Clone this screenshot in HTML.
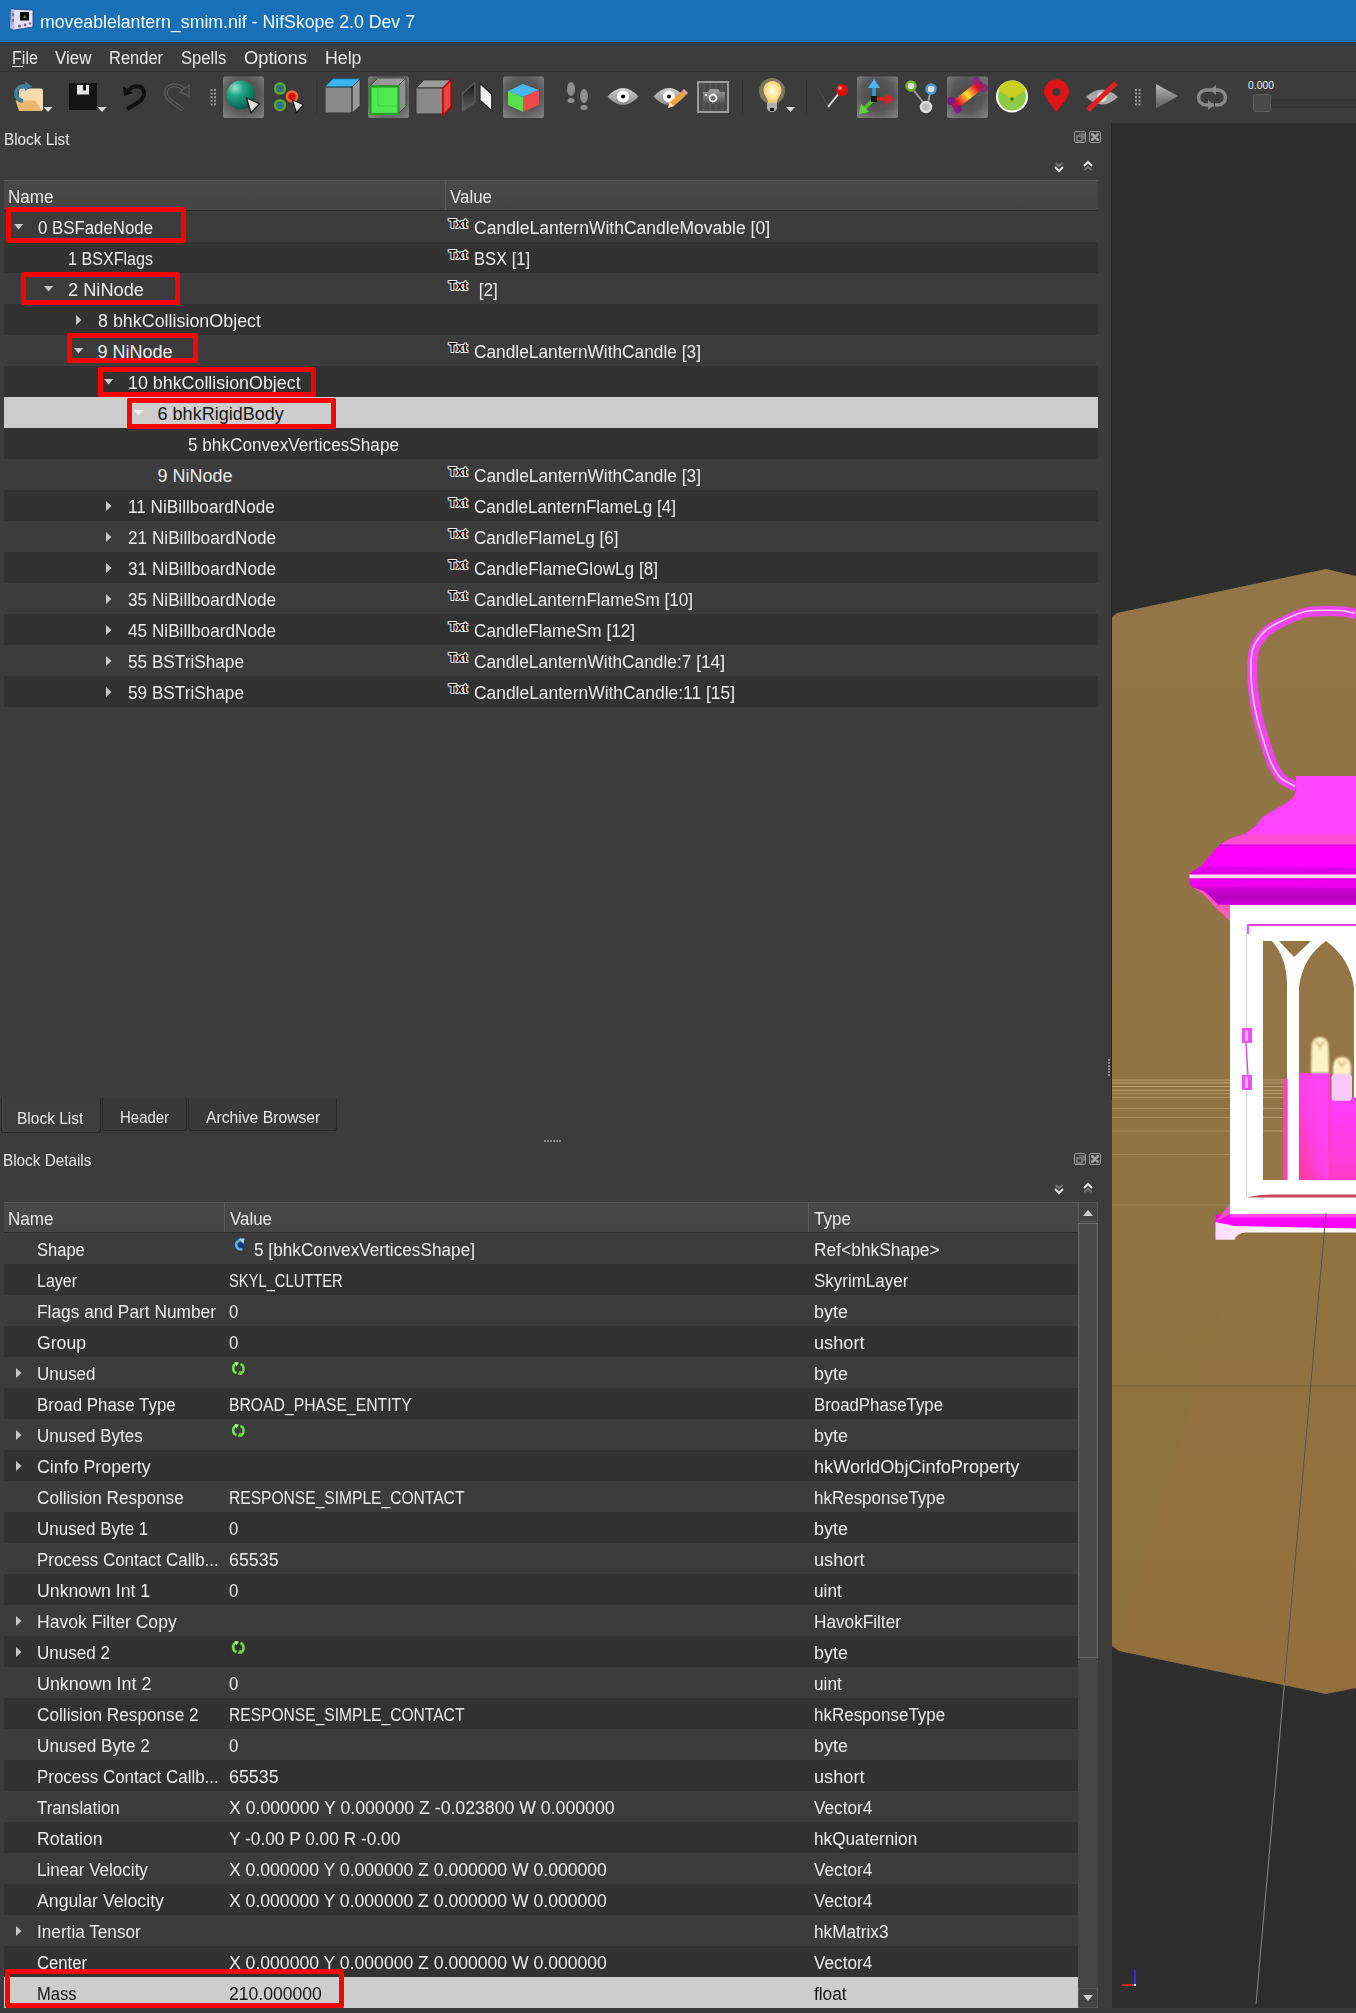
<!DOCTYPE html>
<html><head><meta charset="utf-8"><style>
html,body{margin:0;padding:0}
body{width:1356px;height:2013px;overflow:hidden;position:relative;background:#3b3b3b;font-family:"Liberation Sans", sans-serif}
.t{position:absolute;white-space:pre;line-height:1;transform-origin:0 0;}
</style></head><body>
<div style="position:absolute;left:0px;top:0px;width:1356px;height:42px;background:#1a70b7;"></div><svg style="position:absolute;left:8px;top:6px" width="28" height="26" viewBox="8 6 28 26"><path d="M11,9 L33,10 L33,27 L14,30 L10,28z" fill="#e4e0f4" stroke="#10408a" stroke-width="0.8"/><path d="M11,9 L14,10 L14,30 L10,28z" fill="#b8b4d8"/><rect x="20" y="12" width="9" height="8.5" fill="#0a0a0a"/><path d="M23,18 l2,-3 l1,3z" fill="#5a9a5a"/><circle cx="19.5" cy="26" r="1.6" fill="#806080"/><circle cx="25" cy="25" r="1.4" fill="#806080"/><circle cx="30" cy="23.5" r="1.2" fill="#806080"/><rect x="12" y="13" width="2" height="3" fill="#8070a0"/><rect x="12" y="19" width="2" height="3" fill="#8070a0"/></svg><div class="t" style="left:40px;top:11.92px;font-size:19px;color:#f2fbff;transform:scaleX(0.9320);">moveablelantern_smim.nif - NifSkope 2.0 Dev 7</div><div style="position:absolute;left:0px;top:42px;width:1356px;height:29px;background:#3c3c3c;"></div><div style="position:absolute;left:0px;top:42px;width:1356px;height:4px;background:#353a3e;"></div><div class="t" style="left:11.8px;top:48.76px;font-size:18px;color:#e8e8e8;transform:scaleX(0.8961);">File</div><div class="t" style="left:55.2px;top:48.76px;font-size:18px;color:#e8e8e8;transform:scaleX(0.9405);">View</div><div class="t" style="left:109.3px;top:48.76px;font-size:18px;color:#e8e8e8;transform:scaleX(0.9162);">Render</div><div class="t" style="left:181.3px;top:48.76px;font-size:18px;color:#e8e8e8;transform:scaleX(0.9219);">Spells</div><div class="t" style="left:244.4px;top:48.76px;font-size:18px;color:#e8e8e8;transform:scaleX(1.0170);">Options</div><div class="t" style="left:325px;top:48.76px;font-size:18px;color:#e8e8e8;transform:scaleX(0.9857);">Help</div><div style="position:absolute;left:12px;top:66px;width:11px;height:1px;background:#e8e8e8;"></div><div style="position:absolute;left:0px;top:71px;width:1356px;height:52px;background:#3c3c3c;"></div><div style="position:absolute;left:0px;top:71px;width:1356px;height:1px;background:#333333;"></div><svg style="position:absolute;left:0;top:71px" width="1356" height="52" viewBox="0 71 1356 52"><defs>
<radialGradient id="pressed" cx="0.5" cy="0.45" r="0.72"><stop offset="0" stop-color="#484848"/><stop offset="0.55" stop-color="#585858"/><stop offset="1" stop-color="#848484"/></radialGradient>
<radialGradient id="teal" cx="0.3" cy="0.25" r="0.8"><stop offset="0" stop-color="#9fe3cf"/><stop offset="0.35" stop-color="#1fa886"/><stop offset="1" stop-color="#0a5a48"/></radialGradient>
<linearGradient id="ptr" x1="0" y1="0" x2="1" y2="1"><stop offset="0" stop-color="#ffffff"/><stop offset="1" stop-color="#b8b8b8"/></linearGradient>
<radialGradient id="bulb" cx="0.5" cy="0.45" r="0.6"><stop offset="0" stop-color="#fffbe8"/><stop offset="0.5" stop-color="#fde79a"/><stop offset="1" stop-color="#e8c060"/></radialGradient>
<radialGradient id="bone" cx="0.5" cy="0.5" r="0.6"><stop offset="0" stop-color="#ffee33"/><stop offset="0.45" stop-color="#ff3300"/><stop offset="0.8" stop-color="#cc0044"/><stop offset="1" stop-color="#6a1a8a"/></radialGradient>
<linearGradient id="playg" x1="0" y1="0" x2="0" y2="1"><stop offset="0" stop-color="#b8b8b8"/><stop offset="1" stop-color="#5a5a5a"/></linearGradient>
<linearGradient id="eyeg" x1="0" y1="0" x2="0" y2="1"><stop offset="0" stop-color="#d0d0d0"/><stop offset="1" stop-color="#8a8a8a"/></linearGradient>
<linearGradient id="camg" x1="0" y1="0" x2="0" y2="1"><stop offset="0" stop-color="#a0a0a0"/><stop offset="1" stop-color="#505050"/></linearGradient>
<linearGradient id="faceL" x1="0" y1="0" x2="0" y2="1"><stop offset="0" stop-color="#111"/><stop offset="1" stop-color="#666"/></linearGradient>
<linearGradient id="faceR" x1="0" y1="0" x2="0" y2="1"><stop offset="0" stop-color="#fff"/><stop offset="1" stop-color="#bbb"/></linearGradient>
</defs><rect x="223" y="76.5" width="41" height="41.5" rx="2" fill="url(#pressed)"/><rect x="368" y="76.5" width="41" height="41.5" rx="2" fill="url(#pressed)"/><rect x="503" y="76.5" width="41" height="41.5" rx="2" fill="url(#pressed)"/><rect x="857" y="76.5" width="41" height="41.5" rx="2" fill="url(#pressed)"/><rect x="947" y="76.5" width="41" height="41.5" rx="2" fill="url(#pressed)"/><rect x="19" y="88.5" width="24" height="22.5" rx="2" fill="#f6dbae"/><path d="M15.5,100.5 H35 L42,111 H19z" fill="#e9b76e"/><path d="M28,87.5 A7.5,7.5 0 1 0 23,101" fill="none" stroke="#3f7f95" stroke-width="4"/><path d="M27,90 A5,5 0 0 0 20,95" fill="none" stroke="#a8d8e0" stroke-width="1.2"/><path d="M25,81.5 L32,86.5 L25,91z" fill="#3f7f95"/><path d="M43.5,107 h9 l-4.5,5z" fill="#d8d8d8"/><rect x="69" y="83" width="28" height="27" fill="#141414"/><rect x="77" y="85" width="12" height="9.5" fill="#e8e8e8"/><rect x="83" y="85" width="3" height="5.5" fill="#141414"/><path d="M97.5,107 h9 l-4.5,5z" fill="#d8d8d8"/><path d="M129,90 C134,84 145,85 144,95 C143,101 134,105 127,109" fill="none" stroke="#111" stroke-width="4"/><path d="M123,86 L124,96 L133,93z" fill="#111"/><path d="M184,90 C178,83 166,84 166,93 C166,100 176,104 183,110" fill="none" stroke="#5a5a5a" stroke-width="4"/><path d="M184,90 C178,83 166,84 166,93 C166,100 176,104 183,110" fill="none" stroke="#3c3c3c" stroke-width="1.6"/><path d="M189,85 L189,96 L180,92z" fill="none" stroke="#5a5a5a" stroke-width="1.2"/><rect x="210.5" y="89.0" width="2" height="2" fill="#9a9a9a"/><rect x="214.0" y="89.0" width="2" height="2" fill="#9a9a9a"/><rect x="210.5" y="92.6" width="2" height="2" fill="#9a9a9a"/><rect x="214.0" y="92.6" width="2" height="2" fill="#9a9a9a"/><rect x="210.5" y="96.2" width="2" height="2" fill="#9a9a9a"/><rect x="214.0" y="96.2" width="2" height="2" fill="#9a9a9a"/><rect x="210.5" y="99.8" width="2" height="2" fill="#9a9a9a"/><rect x="214.0" y="99.8" width="2" height="2" fill="#9a9a9a"/><rect x="210.5" y="103.4" width="2" height="2" fill="#9a9a9a"/><rect x="214.0" y="103.4" width="2" height="2" fill="#9a9a9a"/><rect x="1135.0" y="89.0" width="2" height="2" fill="#9a9a9a"/><rect x="1138.5" y="89.0" width="2" height="2" fill="#9a9a9a"/><rect x="1135.0" y="92.6" width="2" height="2" fill="#9a9a9a"/><rect x="1138.5" y="92.6" width="2" height="2" fill="#9a9a9a"/><rect x="1135.0" y="96.2" width="2" height="2" fill="#9a9a9a"/><rect x="1138.5" y="96.2" width="2" height="2" fill="#9a9a9a"/><rect x="1135.0" y="99.8" width="2" height="2" fill="#9a9a9a"/><rect x="1138.5" y="99.8" width="2" height="2" fill="#9a9a9a"/><rect x="1135.0" y="103.4" width="2" height="2" fill="#9a9a9a"/><rect x="1138.5" y="103.4" width="2" height="2" fill="#9a9a9a"/><circle cx="241" cy="95" r="14.5" fill="url(#teal)"/><path d="M246.5,98 l13.2,5.6 l-8.7,9.4z" fill="url(#ptr)" stroke="#1a1a1a" stroke-width="1.3" stroke-linejoin="round"/><circle cx="280" cy="88.6" r="5" fill="#2f6f8a" stroke="#5aaa2a" stroke-width="2.5"/><circle cx="280" cy="105.2" r="5" fill="#2f6f8a" stroke="#5aaa2a" stroke-width="2.5"/><circle cx="292" cy="96.5" r="5" fill="#e01010" stroke="#f06a30" stroke-width="2.5"/><path d="M292.5,100 l11.219999999999999,4.76 l-7.395,7.99z" fill="url(#ptr)" stroke="#1a1a1a" stroke-width="1.3" stroke-linejoin="round"/><rect x="316" y="80" width="1" height="34" fill="#333"/><rect x="742" y="80" width="1" height="34" fill="#333"/><rect x="806" y="80" width="1" height="34" fill="#333"/><path d="M325,87 h27 v26 h-27z" fill="#8a8a8a"/><path d="M325,87 l8,-8 h27 l-8,8z" fill="#3ab4ee" stroke="#1a80c0" stroke-width="0.8"/><path d="M352,87 l8,-8 v27 l-8,7z" fill="#9a9a9a" stroke="#333" stroke-width="0.8"/><path d="M325,87 h27 v26 h-27z" fill="none" stroke="#333" stroke-width="1"/><path d="M370,86 l8,-8 h28 l-8,8z" fill="#9a9a9a" stroke="#444" stroke-width="1"/><path d="M398,86 l8,-8 v28 l-8,8z" fill="#8e8e8e" stroke="#444" stroke-width="1"/><rect x="370.5" y="86.5" width="28" height="27.5" fill="#52e852" stroke="#1fa01f" stroke-width="2.2"/><path d="M378,78 v28 h28" fill="none" stroke="#3cc03c" stroke-width="1" opacity="0.6"/><path d="M416,88 l8,-8 h27 l-8,8z" fill="#9a9a9a" stroke="#333" stroke-width="0.8"/><rect x="416" y="88" width="27" height="26" fill="#8a8a8a" stroke="#333" stroke-width="1"/><path d="M443,88 l8,-8 v27 l-8,8z" fill="#ee4444" stroke="#c00000" stroke-width="1.5"/><path d="M462.6,93.3 L474.9,82.6 V102.2 L462.6,111.2z" fill="url(#faceL)" stroke="#585858" stroke-width="1.6" stroke-linejoin="round"/><path d="M479.9,83.3 L491.8,94.2 V110.8 L479.9,100.2z" fill="#f4f4f4" stroke="#2a2a2a" stroke-width="1.4" stroke-linejoin="round"/><path d="M508,91 l15,-7 l16,6 l-16,7z" fill="#4ab8ee"/><path d="M508,91 l15,6 v15 l-15,-7z" fill="#5ae04a"/><path d="M523,97 l16,-7 v15 l-16,7z" fill="#ee4a4a"/><ellipse cx="571" cy="89" rx="4" ry="7" fill="#8e8e8e"/><ellipse cx="571" cy="100.5" rx="3.5" ry="2.5" fill="#8e8e8e"/><ellipse cx="584" cy="96" rx="4" ry="7" fill="#8e8e8e"/><ellipse cx="584" cy="107.5" rx="3.5" ry="2.5" fill="#8e8e8e"/><path d="M607.5,96.5 Q623,79.5 638.5,96.5 Q623,113.5 607.5,96.5z" fill="url(#eyeg)"/><circle cx="623" cy="96.5" r="6" fill="#fff"/><circle cx="623" cy="96.5" r="2" fill="#000"/><path d="M653.5,96.5 Q669,79.5 684.5,96.5 Q669,113.5 653.5,96.5z" fill="url(#eyeg)"/><circle cx="669" cy="96.5" r="6" fill="#fff"/><circle cx="669" cy="96.5" r="2" fill="#000"/><path d="M668,108 l2,-6 l12,-11 l4,4 l-12,11z" fill="#f0a040"/><path d="M682,91 l2,-2 l4,4 l-2,2z" fill="#f0a0a0"/><path d="M668,108 l2,-6 l4,4z" fill="#ffe0b0"/><rect x="698" y="82" width="30" height="30" fill="#4a4a4a" stroke="#9a9a9a" stroke-width="2"/><line x1="704" y1="83" x2="704" y2="111" stroke="#5e5e5e" stroke-width="1"/><line x1="710" y1="83" x2="710" y2="111" stroke="#5e5e5e" stroke-width="1"/><line x1="716" y1="83" x2="716" y2="111" stroke="#5e5e5e" stroke-width="1"/><line x1="722" y1="83" x2="722" y2="111" stroke="#5e5e5e" stroke-width="1"/><path d="M703,92 h5 l2,-3 h8 l2,3 h5 v12 h-22z" fill="url(#camg)"/><circle cx="713" cy="98" r="3.5" fill="none" stroke="#fff" stroke-width="1.8"/><rect x="705" y="94" width="2" height="2" fill="#fff"/><circle cx="772" cy="91" r="13" fill="#f8e9a0" opacity="0.35"/><path d="M764,93 a9,9 0 1 1 17,0 c-1,3 -4,6 -4,10 h-9 c0,-4 -3,-7 -4,-10z" fill="url(#bulb)"/><path d="M767,103 h10 v5 a5,4 0 0 1 -10,0z" fill="#b0b0b0"/><rect x="770" y="108" width="4" height="3" fill="#111"/><path d="M786,107 h9 l-4.5,5z" fill="#d8d8d8"/><path d="M818,88 L828,106 L838,92" fill="none" stroke="#4a4a4a" stroke-width="1.5"/><path d="M828,107 L840,92" fill="none" stroke="#d8d8d8" stroke-width="2"/><circle cx="842" cy="90" r="6" fill="#e01010"/><circle cx="840" cy="88" r="2" fill="#ff8080"/><path d="M874,99 v-14" stroke="#2aa0e0" stroke-width="3.5"/><path d="M868,88 l6,-9 l6,9z" fill="#4ab8f0"/><path d="M874,99 h14" stroke="#e02020" stroke-width="3.5"/><path d="M885,93 l9,6 l-9,6z" fill="#e02020"/><path d="M874,99 l-11,11" stroke="#50c030" stroke-width="3.5"/><path d="M861,104 l-2,10 l10,-2z" fill="#60d040"/><rect x="871" y="96" width="6" height="6" fill="#111"/><path d="M911,87 L927,107 L931,89" fill="none" stroke="#9a9a9a" stroke-width="2"/><circle cx="911" cy="86" r="4.5" fill="#ddd" stroke="#6ab02a" stroke-width="2.5"/><circle cx="931" cy="89" r="4.5" fill="#ddd" stroke="#3aa0d8" stroke-width="2.5"/><circle cx="926" cy="107" r="5" fill="#bbb" stroke="#ddd" stroke-width="2.5"/><linearGradient id="boneL" gradientUnits="userSpaceOnUse" x1="952" y1="108" x2="983" y2="82"><stop offset="0" stop-color="#6a1a90"/><stop offset="0.2" stop-color="#e01030"/><stop offset="0.5" stop-color="#ffe030"/><stop offset="0.8" stop-color="#e01030"/><stop offset="1" stop-color="#6a1a90"/></linearGradient><path d="M956,104 L979,86" stroke="url(#boneL)" stroke-width="9" stroke-linecap="round"/><circle cx="951" cy="101" r="4" fill="#7a1a8a"/><circle cx="958" cy="109" r="4" fill="#7a1a8a"/><circle cx="976" cy="81" r="4" fill="#8a2a7a"/><circle cx="984" cy="88" r="4" fill="#8a2a7a"/><path d="M953,103 L958,108" stroke="#c01040" stroke-width="3"/><path d="M977,83 L982,88" stroke="#c01040" stroke-width="3"/><circle cx="1012" cy="96.5" r="15" fill="#8ccc44" stroke="#fff" stroke-width="2"/><path d="M998,90 A15,15 0 0 1 1026,90 L1012,99z" fill="#c8d020"/><circle cx="1012" cy="99" r="1.8" fill="#3a7a10"/><path d="M1056.5,112 C1050,103 1044,97 1044,92 a12.5,12.5 0 0 1 25,0 c0,5 -6,11 -12.5,20z" fill="#e01414"/><circle cx="1056.5" cy="92" r="4" fill="#3c3c3c"/><path d="M1086,97 Q1102,82 1118,97 Q1102,112 1086,97z" fill="#a8a8a8"/><circle cx="1102" cy="97" r="5" fill="#ddd"/><path d="M1088,110 L1116,83" stroke="#e02020" stroke-width="5"/><path d="M1156,84 L1178,96 L1156,108.5z" fill="url(#playg)"/><path d="M1206,90 h12 a7.5,7.5 0 0 1 0,15 h-3 M1214,105 h-8 a7.5,7.5 0 0 1 0,-15 h3" fill="none" stroke="#8a8a8a" stroke-width="3.5"/><path d="M1216,85 l-6,5 l6,5z" fill="#8a8a8a"/><path d="M1208,100 l6,5 l-6,5z" fill="#8a8a8a"/><rect x="1271" y="100" width="90" height="7" fill="#3a3a3a" stroke="#2e2e2e" stroke-width="1"/><rect x="1253.5" y="94.5" width="17" height="17" rx="2" fill="#4a4a4a" stroke="#5e5e5e" stroke-width="1"/><text x="1248" y="89" font-family="Liberation Sans" font-size="10.5" fill="#f0f0f0" textLength="26" lengthAdjust="spacingAndGlyphs">0.000</text></svg><div style="position:absolute;left:1112px;top:123px;width:244px;height:1885px;background:#2e2e2e;"></div><svg style="position:absolute;left:1112px;top:123px" width="244" height="1885" viewBox="1112 123 244 1885">
<defs><linearGradient id="brg" gradientUnits="userSpaceOnUse" x1="0" y1="570" x2="0" y2="1694"><stop offset="0" stop-color="#937648"/><stop offset="0.5" stop-color="#917444"/><stop offset="1" stop-color="#926f3c"/></linearGradient>
<filter id="blur2"><feGaussianBlur stdDeviation="2"/></filter><filter id="blur1" x="-50%" y="-50%" width="200%" height="200%"><feGaussianBlur stdDeviation="1"/></filter></defs>
<polygon points="1112,617 1117,613 1326,569 1356,576 1356,1688 1326,1694 1119,1651 1112,1646" fill="url(#brg)"/>
<linearGradient id="olv" gradientUnits="userSpaceOnUse" x1="1240" y1="1240" x2="1150" y2="1600"><stop offset="0" stop-color="#85763a" stop-opacity="0"/><stop offset="1" stop-color="#887538" stop-opacity="0.5"/></linearGradient><polygon points="1112,1230 1245,1230 1119,1643 1112,1640" fill="url(#olv)"/>
<line x1="1112" y1="1386" x2="1356" y2="1386" stroke="#6f5a34" stroke-width="1" opacity="0.8"/>
<g stroke="#d9bb8a" stroke-width="1">
<line x1="1112" y1="1080" x2="1230" y2="1080" opacity="0.6"/>
<line x1="1112" y1="1083" x2="1230" y2="1083" opacity="0.7"/>
<line x1="1112" y1="1086.5" x2="1230" y2="1086.5" opacity="0.6"/>
<line x1="1112" y1="1090.5" x2="1230" y2="1090.5" opacity="0.55"/>
<line x1="1112" y1="1093.5" x2="1230" y2="1093.5" opacity="0.5"/>
<line x1="1112" y1="1097.5" x2="1230" y2="1097.5" opacity="0.45"/>
<line x1="1112" y1="1108.5" x2="1230" y2="1108.5" opacity="0.4"/>
<line x1="1112" y1="1117.5" x2="1230" y2="1117.5" opacity="0.35"/>
<line x1="1112" y1="1131" x2="1230" y2="1131" opacity="0.3"/>
<line x1="1112" y1="1154.5" x2="1230" y2="1154.5" opacity="0.3"/>
<line x1="1112" y1="1205" x2="1230" y2="1205" opacity="0.3"/>
</g>
<!-- handle -->
<path d="M1296,787 C1290,784 1286,782 1282,779 C1276,773 1272,764 1268,752 L1260,726 C1257,714 1254,700 1253,688 C1252,675 1251,660 1254,650 C1256,644 1259,639 1264,634 C1268,630 1272,627 1278,624 L1293,617 C1300,614 1305,612 1312,611.5 C1322,611 1335,611 1345,611.5 L1356,614" fill="none" stroke="#f044f0" stroke-width="10" stroke-linejoin="round"/>
<path d="M1296,787 C1290,784 1286,782 1282,779 C1276,773 1272,764 1268,752 L1260,726 C1257,714 1254,700 1253,688 C1252,675 1251,660 1254,650 C1256,644 1259,639 1264,634 C1268,630 1272,627 1278,624 L1293,617 C1300,614 1305,612 1312,611.5 C1322,611 1335,611 1345,611.5 L1356,614" fill="none" stroke="#ffd0ff" stroke-width="1.6" transform="translate(-1.2,-0.8)"/>
<!-- roof -->
<linearGradient id="rfdark" x1="0" y1="0" x2="0" y2="1"><stop offset="0" stop-color="#cf00d6"/><stop offset="0.6" stop-color="#b400c4"/><stop offset="1" stop-color="#d400dc"/></linearGradient>
<rect x="1296" y="776" width="60" height="20" fill="#ff44ff"/>
<polygon points="1296.8,789.9 1293,797.6 1282.5,805.4 1270.8,812 1263,817 1255.3,826.2 1245,834 1232,837.9 1222.8,843 1215,849.6 1207.3,858.6 1200.8,866.4 1190.4,872.9 1190,882 1193,887.2 1203.4,891 1211,897.6 1217.6,904.7 1356,904.7 1356,790" fill="#ff00ff"/>
<polygon points="1296.8,789.9 1293,797.6 1282.5,805.4 1270.8,812 1263,817 1255.3,826.2 1245,834 1232,837.9 1222.8,843 1220,845 1356,845 1356,790" fill="#ff44ff"/>
<polygon points="1246,834.5 1232,837.9 1222.8,843 1220,845 1356,845 1356,834.5" fill="#ff4ed2"/>
<rect x="1219" y="844.5" width="137" height="1.5" fill="#d800e0"/>
<polygon points="1200.8,866.4 1356,867.5 1356,874.5 1190,874.5 1190.4,872.9" fill="#e000ee"/>
<rect x="1189.5" y="874.5" width="166.5" height="4" fill="#ffd8ff"/>
<polygon points="1189.5,878.5 1356,878.5 1356,888 1194,888 1189.6,884" fill="#ee00ee"/>
<polygon points="1193,887.2 1356,888 1356,904.7 1217.6,904.7 1211,897.6 1203.4,891" fill="url(#rfdark)"/>
<polygon points="1194,888 1203.4,891 1211,897.6 1217.6,904.7 1230,905 1230,921 1214,906 1204,895" fill="#ff5ab8"/>
<!-- frame -->
<rect x="1230" y="905" width="126" height="312" fill="#ffffff"/>
<rect x="1247" y="924" width="109" height="2" fill="#f040f0"/><rect x="1247" y="924" width="2" height="10" fill="#f060f0"/>
<line x1="1246.5" y1="925" x2="1246.5" y2="1198" stroke="#d8d8e0" stroke-width="1"/>
<path d="M1263,941 L1272,941 Q1287,958 1287,985 L1287,1180 L1263,1180 Z" fill="#937546"/>
<polygon points="1279,941 1311,941 1294,957" fill="#937546"/>
<path d="M1299,1180 L1299,988 Q1302,958 1326,941 Q1350,958 1354,988 L1354,1180 Z" fill="#937546"/>
<g stroke="#d9bb8a" stroke-width="1" opacity="0.6">
<line x1="1263" y1="1080" x2="1287" y2="1080"/><line x1="1263" y1="1083" x2="1287" y2="1083"/><line x1="1263" y1="1086.5" x2="1287" y2="1086.5"/><line x1="1263" y1="1090.5" x2="1287" y2="1090.5"/><line x1="1263" y1="1093.5" x2="1287" y2="1093.5"/><line x1="1263" y1="1097.5" x2="1287" y2="1097.5"/><line x1="1263" y1="1108.5" x2="1287" y2="1108.5"/><line x1="1263" y1="1117.5" x2="1287" y2="1117.5"/><line x1="1263" y1="1131" x2="1287" y2="1131"/>
</g>
<!-- candles -->
<linearGradient id="cndA" x1="1" y1="0" x2="0" y2="1"><stop offset="0" stop-color="#ff44ff"/><stop offset="0.55" stop-color="#ff40e8"/><stop offset="1" stop-color="#ff3a98"/></linearGradient>
<linearGradient id="cndB" x1="0" y1="0" x2="0" y2="1"><stop offset="0" stop-color="#ff3cff"/><stop offset="1" stop-color="#ff3cc8"/></linearGradient>
<rect x="1283.3" y="1079" width="4.3" height="101" fill="#ff40b8"/>
<rect x="1299" y="1073" width="31" height="107" fill="url(#cndA)"/>
<rect x="1330" y="1097.6" width="26" height="82.4" fill="url(#cndB)"/>
<rect x="1328" y="1073" width="3" height="107" fill="#ff3cb0" opacity="0.5"/>
<g filter="url(#blur1)">
<path d="M1311,1073 L1311.5,1047 Q1312,1037 1320,1037 Q1328,1037 1328.5,1047 L1329,1073 Z" fill="#fff2c4"/>
<path d="M1333,1075 L1333,1066 Q1334,1057 1342,1057 Q1350,1057 1351,1066 L1351,1075 Z" fill="#fff2c4"/>
<path d="M1316,1041 L1320,1047 L1324,1041" fill="none" stroke="#d8b878" stroke-width="2"/>
<path d="M1338,1061 L1342,1066 L1346,1061" fill="none" stroke="#d8b878" stroke-width="2"/>
</g>
<rect x="1331.5" y="1074" width="20.5" height="27" rx="4" fill="#f8c8f8"/>
<!-- hinges -->
<rect x="1242" y="1028" width="10" height="15" fill="#f050f0"/>
<rect x="1242" y="1075" width="10" height="15" fill="#f050f0"/>
<rect x="1245" y="1030" width="3" height="11" fill="#ffb0ff"/>
<rect x="1245" y="1077" width="3" height="11" fill="#ffb0ff"/>
<line x1="1246" y1="1043" x2="1248" y2="1075" stroke="#e040e0" stroke-width="1.2"/>
<path d="M1247,1197.5 Q1258,1194.5 1272,1194.5 L1356,1194.5 L1356,1197.5 Z" fill="#c84858"/>
<!-- base -->
<linearGradient id="baseW" x1="0" y1="0" x2="1" y2="0"><stop offset="0" stop-color="#ffd8ff"/><stop offset="0.3" stop-color="#fff4ff"/><stop offset="1" stop-color="#fff8ff"/></linearGradient>
<rect x="1215.5" y="1214.5" width="140.5" height="14" fill="#ff00ff"/>
<rect x="1230" y="1214.5" width="126" height="3" fill="#ff48ee"/>
<path d="M1215.5,1222 L1235,1226 L1356,1228.5 L1356,1232.6 L1246,1232.6 Q1237,1233 1234.5,1239.7 L1215.5,1239.7 Z" fill="url(#baseW)"/>
<polygon points="1215.5,1222 1230,1204 1230,1214.5" fill="#ff50c0"/>
<line x1="1326" y1="1213" x2="1284.4" y2="1683" stroke="#5e5444" stroke-width="1"/><line x1="1284.4" y1="1683" x2="1256" y2="2004" stroke="#8a8a8a" stroke-width="1"/>
<line x1="1122" y1="1985" x2="1136" y2="1985" stroke="#e02020" stroke-width="2"/>
<line x1="1135" y1="1970" x2="1135" y2="1985" stroke="#3030e0" stroke-width="2"/>
<rect x="1134" y="1984" width="2" height="2" fill="#fff"/>
</svg><div style="position:absolute;left:0px;top:123px;width:1112px;height:977px;background:#3c3c3c;"></div><div style="position:absolute;left:1111px;top:123px;width:1px;height:1890px;background:#262626;"></div><div class="t" style="left:3.5px;top:130.61px;font-size:17px;color:#e8e8e8;transform:scaleX(0.9003);">Block List</div><div style="position:absolute;left:4px;top:180px;width:1094px;height:31px;background:linear-gradient(#474747 0,#474747 2px,#4e4e4e 2px,#4e4e4e 3px,#484848 3px,#454545 100%);border-top:1px solid #5a5a5a;box-sizing:border-box"></div><div style="position:absolute;left:4px;top:210px;width:1094px;height:1px;background:#2a2a2a;"></div><div style="position:absolute;left:445px;top:181px;width:1px;height:29px;background:#5c5c5c;"></div><div class="t" style="left:8px;top:187.76px;font-size:18px;color:#e8e8e8;transform:scaleX(0.9476);">Name</div><div class="t" style="left:450px;top:187.76px;font-size:18px;color:#e8e8e8;transform:scaleX(0.9395);">Value</div><div style="position:absolute;left:4px;top:211px;width:1094px;height:889px;background:#3c3c3c;"></div><svg style="position:absolute;left:13.5px;top:223.8px" width="10" height="6"><path d="M0 0H9.2L4.6 5.4Z" fill="#c8c8c8"/></svg><div class="t" style="left:37.6px;top:218.76px;font-size:18px;color:#ececec;transform:scaleX(0.9342);">0 BSFadeNode</div><svg style="position:absolute;left:447px;top:216px" width="23" height="14" viewBox="0 0 23 14"><text x="1.5" y="11.5" font-family="Liberation Sans" font-weight="bold" font-size="13.5" fill="#000" stroke="#f4f4f4" stroke-width="2.2" paint-order="stroke" stroke-linejoin="round" textLength="19" lengthAdjust="spacingAndGlyphs">Txt</text></svg><div class="t" style="left:474.2px;top:218.76px;font-size:18px;color:#ececec;transform:scaleX(0.9731);">CandleLanternWithCandleMovable [0]</div><div style="position:absolute;left:4px;top:242px;width:1094px;height:31px;background:#323232;"></div><div class="t" style="left:67.6px;top:249.76px;font-size:18px;color:#ececec;transform:scaleX(0.8943);">1 BSXFlags</div><svg style="position:absolute;left:447px;top:247px" width="23" height="14" viewBox="0 0 23 14"><text x="1.5" y="11.5" font-family="Liberation Sans" font-weight="bold" font-size="13.5" fill="#000" stroke="#f4f4f4" stroke-width="2.2" paint-order="stroke" stroke-linejoin="round" textLength="19" lengthAdjust="spacingAndGlyphs">Txt</text></svg><div class="t" style="left:474.2px;top:249.76px;font-size:18px;color:#ececec;transform:scaleX(0.9176);">BSX [1]</div><svg style="position:absolute;left:43.5px;top:285.8px" width="10" height="6"><path d="M0 0H9.2L4.6 5.4Z" fill="#c8c8c8"/></svg><div class="t" style="left:67.6px;top:280.76px;font-size:18px;color:#ececec;transform:scaleX(1.0127);">2 NiNode</div><svg style="position:absolute;left:447px;top:278px" width="23" height="14" viewBox="0 0 23 14"><text x="1.5" y="11.5" font-family="Liberation Sans" font-weight="bold" font-size="13.5" fill="#000" stroke="#f4f4f4" stroke-width="2.2" paint-order="stroke" stroke-linejoin="round" textLength="19" lengthAdjust="spacingAndGlyphs">Txt</text></svg><div class="t" style="left:474.2px;top:280.76px;font-size:18px;color:#ececec;transform:scaleX(0.9550);"> [2]</div><div style="position:absolute;left:4px;top:304px;width:1094px;height:31px;background:#323232;"></div><svg style="position:absolute;left:76px;top:314.5px" width="6" height="10"><path d="M0 0V10L5.5 5Z" fill="#c8c8c8"/></svg><div class="t" style="left:97.6px;top:311.76px;font-size:18px;color:#ececec;transform:scaleX(0.9933);">8 bhkCollisionObject</div><svg style="position:absolute;left:73.5px;top:347.8px" width="10" height="6"><path d="M0 0H9.2L4.6 5.4Z" fill="#c8c8c8"/></svg><div class="t" style="left:97.6px;top:342.76px;font-size:18px;color:#ececec;">9 NiNode</div><svg style="position:absolute;left:447px;top:340px" width="23" height="14" viewBox="0 0 23 14"><text x="1.5" y="11.5" font-family="Liberation Sans" font-weight="bold" font-size="13.5" fill="#000" stroke="#f4f4f4" stroke-width="2.2" paint-order="stroke" stroke-linejoin="round" textLength="19" lengthAdjust="spacingAndGlyphs">Txt</text></svg><div class="t" style="left:474.2px;top:342.76px;font-size:18px;color:#ececec;transform:scaleX(0.9612);">CandleLanternWithCandle [3]</div><div style="position:absolute;left:4px;top:366px;width:1094px;height:31px;background:#323232;"></div><svg style="position:absolute;left:103.5px;top:378.8px" width="10" height="6"><path d="M0 0H9.2L4.6 5.4Z" fill="#c8c8c8"/></svg><div class="t" style="left:127.6px;top:373.76px;font-size:18px;color:#ececec;transform:scaleX(0.9914);">10 bhkCollisionObject</div><div style="position:absolute;left:4px;top:397px;width:1094px;height:31px;background:#cdcdcd;"></div><svg style="position:absolute;left:133.5px;top:409.8px" width="10" height="6"><path d="M0 0H9.2L4.6 5.4Z" fill="#f0f0f0"/></svg><div class="t" style="left:157.6px;top:404.76px;font-size:18px;color:#151515;">6 bhkRigidBody</div><div style="position:absolute;left:4px;top:428px;width:1094px;height:31px;background:#323232;"></div><div class="t" style="left:187.6px;top:435.76px;font-size:18px;color:#ececec;transform:scaleX(0.9541);">5 bhkConvexVerticesShape</div><div class="t" style="left:157.6px;top:466.76px;font-size:18px;color:#ececec;">9 NiNode</div><svg style="position:absolute;left:447px;top:464px" width="23" height="14" viewBox="0 0 23 14"><text x="1.5" y="11.5" font-family="Liberation Sans" font-weight="bold" font-size="13.5" fill="#000" stroke="#f4f4f4" stroke-width="2.2" paint-order="stroke" stroke-linejoin="round" textLength="19" lengthAdjust="spacingAndGlyphs">Txt</text></svg><div class="t" style="left:474.2px;top:466.76px;font-size:18px;color:#ececec;transform:scaleX(0.9612);">CandleLanternWithCandle [3]</div><div style="position:absolute;left:4px;top:490px;width:1094px;height:31px;background:#323232;"></div><svg style="position:absolute;left:106px;top:500.5px" width="6" height="10"><path d="M0 0V10L5.5 5Z" fill="#c8c8c8"/></svg><div class="t" style="left:127.6px;top:497.76px;font-size:18px;color:#ececec;transform:scaleX(0.9550);">11 NiBillboardNode</div><svg style="position:absolute;left:447px;top:495px" width="23" height="14" viewBox="0 0 23 14"><text x="1.5" y="11.5" font-family="Liberation Sans" font-weight="bold" font-size="13.5" fill="#000" stroke="#f4f4f4" stroke-width="2.2" paint-order="stroke" stroke-linejoin="round" textLength="19" lengthAdjust="spacingAndGlyphs">Txt</text></svg><div class="t" style="left:474.2px;top:497.76px;font-size:18px;color:#ececec;transform:scaleX(0.9477);">CandleLanternFlameLg [4]</div><svg style="position:absolute;left:106px;top:531.5px" width="6" height="10"><path d="M0 0V10L5.5 5Z" fill="#c8c8c8"/></svg><div class="t" style="left:127.6px;top:528.76px;font-size:18px;color:#ececec;transform:scaleX(0.9550);">21 NiBillboardNode</div><svg style="position:absolute;left:447px;top:526px" width="23" height="14" viewBox="0 0 23 14"><text x="1.5" y="11.5" font-family="Liberation Sans" font-weight="bold" font-size="13.5" fill="#000" stroke="#f4f4f4" stroke-width="2.2" paint-order="stroke" stroke-linejoin="round" textLength="19" lengthAdjust="spacingAndGlyphs">Txt</text></svg><div class="t" style="left:474.2px;top:528.76px;font-size:18px;color:#ececec;transform:scaleX(0.9494);">CandleFlameLg [6]</div><div style="position:absolute;left:4px;top:552px;width:1094px;height:31px;background:#323232;"></div><svg style="position:absolute;left:106px;top:562.5px" width="6" height="10"><path d="M0 0V10L5.5 5Z" fill="#c8c8c8"/></svg><div class="t" style="left:127.6px;top:559.76px;font-size:18px;color:#ececec;transform:scaleX(0.9550);">31 NiBillboardNode</div><svg style="position:absolute;left:447px;top:557px" width="23" height="14" viewBox="0 0 23 14"><text x="1.5" y="11.5" font-family="Liberation Sans" font-weight="bold" font-size="13.5" fill="#000" stroke="#f4f4f4" stroke-width="2.2" paint-order="stroke" stroke-linejoin="round" textLength="19" lengthAdjust="spacingAndGlyphs">Txt</text></svg><div class="t" style="left:474.2px;top:559.76px;font-size:18px;color:#ececec;transform:scaleX(0.9528);">CandleFlameGlowLg [8]</div><svg style="position:absolute;left:106px;top:593.5px" width="6" height="10"><path d="M0 0V10L5.5 5Z" fill="#c8c8c8"/></svg><div class="t" style="left:127.6px;top:590.76px;font-size:18px;color:#ececec;transform:scaleX(0.9550);">35 NiBillboardNode</div><svg style="position:absolute;left:447px;top:588px" width="23" height="14" viewBox="0 0 23 14"><text x="1.5" y="11.5" font-family="Liberation Sans" font-weight="bold" font-size="13.5" fill="#000" stroke="#f4f4f4" stroke-width="2.2" paint-order="stroke" stroke-linejoin="round" textLength="19" lengthAdjust="spacingAndGlyphs">Txt</text></svg><div class="t" style="left:474.2px;top:590.76px;font-size:18px;color:#ececec;transform:scaleX(0.9517);">CandleLanternFlameSm [10]</div><div style="position:absolute;left:4px;top:614px;width:1094px;height:31px;background:#323232;"></div><svg style="position:absolute;left:106px;top:624.5px" width="6" height="10"><path d="M0 0V10L5.5 5Z" fill="#c8c8c8"/></svg><div class="t" style="left:127.6px;top:621.76px;font-size:18px;color:#ececec;transform:scaleX(0.9550);">45 NiBillboardNode</div><svg style="position:absolute;left:447px;top:619px" width="23" height="14" viewBox="0 0 23 14"><text x="1.5" y="11.5" font-family="Liberation Sans" font-weight="bold" font-size="13.5" fill="#000" stroke="#f4f4f4" stroke-width="2.2" paint-order="stroke" stroke-linejoin="round" textLength="19" lengthAdjust="spacingAndGlyphs">Txt</text></svg><div class="t" style="left:474.2px;top:621.76px;font-size:18px;color:#ececec;transform:scaleX(0.9522);">CandleFlameSm [12]</div><svg style="position:absolute;left:106px;top:655.5px" width="6" height="10"><path d="M0 0V10L5.5 5Z" fill="#c8c8c8"/></svg><div class="t" style="left:127.6px;top:652.76px;font-size:18px;color:#ececec;transform:scaleX(0.9550);">55 BSTriShape</div><svg style="position:absolute;left:447px;top:650px" width="23" height="14" viewBox="0 0 23 14"><text x="1.5" y="11.5" font-family="Liberation Sans" font-weight="bold" font-size="13.5" fill="#000" stroke="#f4f4f4" stroke-width="2.2" paint-order="stroke" stroke-linejoin="round" textLength="19" lengthAdjust="spacingAndGlyphs">Txt</text></svg><div class="t" style="left:474.2px;top:652.76px;font-size:18px;color:#ececec;transform:scaleX(0.9611);">CandleLanternWithCandle:7 [14]</div><div style="position:absolute;left:4px;top:676px;width:1094px;height:31px;background:#323232;"></div><svg style="position:absolute;left:106px;top:686.5px" width="6" height="10"><path d="M0 0V10L5.5 5Z" fill="#c8c8c8"/></svg><div class="t" style="left:127.6px;top:683.76px;font-size:18px;color:#ececec;transform:scaleX(0.9550);">59 BSTriShape</div><svg style="position:absolute;left:447px;top:681px" width="23" height="14" viewBox="0 0 23 14"><text x="1.5" y="11.5" font-family="Liberation Sans" font-weight="bold" font-size="13.5" fill="#000" stroke="#f4f4f4" stroke-width="2.2" paint-order="stroke" stroke-linejoin="round" textLength="19" lengthAdjust="spacingAndGlyphs">Txt</text></svg><div class="t" style="left:474.2px;top:683.76px;font-size:18px;color:#ececec;transform:scaleX(0.9672);">CandleLanternWithCandle:11 [15]</div><div style="position:absolute;left:6px;top:207px;width:170px;height:26px;border:5px solid #fa0000;border-radius:2px"></div><div style="position:absolute;left:21px;top:272px;width:149px;height:23px;border:5px solid #fa0000;border-radius:2px"></div><div style="position:absolute;left:67px;top:333px;width:121px;height:20px;border:5px solid #fa0000;border-radius:2px"></div><div style="position:absolute;left:98px;top:367px;width:208px;height:20px;border:5px solid #fa0000;border-radius:2px"></div><div style="position:absolute;left:127px;top:398px;width:199px;height:21px;border:5px solid #fa0000;border-radius:2px"></div><div style="position:absolute;left:1074px;top:131px;width:10px;height:10px;border:1px solid #9a9a9a;border-radius:2px"></div><div style="position:absolute;left:1089px;top:131px;width:10px;height:10px;border:1px solid #9a9a9a;border-radius:2px"></div><svg style="position:absolute;left:1090px;top:132px" width="10" height="10"><path d="M2.2 2.2L7.8 7.8M7.8 2.2L2.2 7.8" stroke="#a0a0a0" stroke-width="2.8" stroke-linecap="round"/></svg><svg style="position:absolute;left:1076px;top:133px" width="9" height="9"><rect x="1" y="3" width="5" height="5" fill="none" stroke="#9a9a9a" stroke-width="1.2"/><path d="M3 1H8V6" fill="none" stroke="#9a9a9a" stroke-width="1.2"/></svg><svg style="position:absolute;left:1053px;top:161px" width="12" height="13"><path d="M2.5,2 L6,5 L9.5,2" fill="none" stroke="#7a7a7a" stroke-width="1.8"/><path d="M2,6 L6,10 L10,6" fill="none" stroke="#e4e4e4" stroke-width="2"/></svg><svg style="position:absolute;left:1082px;top:160px" width="12" height="13"><path d="M2,6 L6,2 L10,6" fill="none" stroke="#e4e4e4" stroke-width="2"/><path d="M2.5,10 L6,7 L9.5,10" fill="none" stroke="#7a7a7a" stroke-width="1.8"/></svg><div style="position:absolute;left:0px;top:1100px;width:1112px;height:48px;background:#3c3c3c;"></div><div style="position:absolute;left:1px;top:1098px;width:98px;height:34px;background:#3e3e3e;border:1px solid #2a2a2a;border-top:none;border-radius:0 0 3px 3px;box-shadow:inset 1px 0 0 #444"></div><div style="position:absolute;left:102px;top:1098px;width:83px;height:32px;background:#393939;border:1px solid #2a2a2a;border-top:none;border-radius:0 0 3px 3px"></div><div style="position:absolute;left:188px;top:1098px;width:147px;height:32px;background:#393939;border:1px solid #2a2a2a;border-top:none;border-radius:0 0 3px 3px"></div><div class="t" style="left:17.3px;top:1109.61px;font-size:17px;color:#e8e8e8;transform:scaleX(0.9113);">Block List</div><div class="t" style="left:119.5px;top:1108.61px;font-size:17px;color:#e8e8e8;transform:scaleX(0.8805);">Header</div><div class="t" style="left:205.7px;top:1108.61px;font-size:17px;color:#e8e8e8;transform:scaleX(0.9235);">Archive Browser</div><div style="position:absolute;left:1108px;top:1059px;width:2px;height:2px;background:#8a8a8a;"></div><div style="position:absolute;left:1108px;top:1062px;width:2px;height:2px;background:#8a8a8a;"></div><div style="position:absolute;left:1108px;top:1065px;width:2px;height:2px;background:#8a8a8a;"></div><div style="position:absolute;left:1108px;top:1068px;width:2px;height:2px;background:#8a8a8a;"></div><div style="position:absolute;left:1108px;top:1071px;width:2px;height:2px;background:#8a8a8a;"></div><div style="position:absolute;left:1108px;top:1074px;width:2px;height:2px;background:#8a8a8a;"></div><div style="position:absolute;left:544px;top:1140px;width:2px;height:2px;background:#8a8a8a;"></div><div style="position:absolute;left:547px;top:1140px;width:2px;height:2px;background:#8a8a8a;"></div><div style="position:absolute;left:550px;top:1140px;width:2px;height:2px;background:#8a8a8a;"></div><div style="position:absolute;left:553px;top:1140px;width:2px;height:2px;background:#8a8a8a;"></div><div style="position:absolute;left:556px;top:1140px;width:2px;height:2px;background:#8a8a8a;"></div><div style="position:absolute;left:559px;top:1140px;width:2px;height:2px;background:#8a8a8a;"></div><div style="position:absolute;left:0px;top:1148px;width:1112px;height:865px;background:#3c3c3c;"></div><div class="t" style="left:3.2px;top:1151.61px;font-size:17px;color:#e8e8e8;transform:scaleX(0.8996);">Block Details</div><div style="position:absolute;left:1074px;top:1153px;width:10px;height:10px;border:1px solid #9a9a9a;border-radius:2px"></div><div style="position:absolute;left:1089px;top:1153px;width:10px;height:10px;border:1px solid #9a9a9a;border-radius:2px"></div><svg style="position:absolute;left:1090px;top:1154px" width="10" height="10"><path d="M2.2 2.2L7.8 7.8M7.8 2.2L2.2 7.8" stroke="#a0a0a0" stroke-width="2.8" stroke-linecap="round"/></svg><svg style="position:absolute;left:1076px;top:1155px" width="9" height="9"><rect x="1" y="3" width="5" height="5" fill="none" stroke="#9a9a9a" stroke-width="1.2"/><path d="M3 1H8V6" fill="none" stroke="#9a9a9a" stroke-width="1.2"/></svg><svg style="position:absolute;left:1053px;top:1183px" width="12" height="13"><path d="M2.5,2 L6,5 L9.5,2" fill="none" stroke="#7a7a7a" stroke-width="1.8"/><path d="M2,6 L6,10 L10,6" fill="none" stroke="#e4e4e4" stroke-width="2"/></svg><svg style="position:absolute;left:1082px;top:1182px" width="12" height="13"><path d="M2,6 L6,2 L10,6" fill="none" stroke="#e4e4e4" stroke-width="2"/><path d="M2.5,10 L6,7 L9.5,10" fill="none" stroke="#7a7a7a" stroke-width="1.8"/></svg><div style="position:absolute;left:4px;top:1202px;width:1074px;height:31px;background:linear-gradient(#474747 0,#474747 2px,#4e4e4e 2px,#4e4e4e 3px,#484848 3px,#454545 100%);border-top:1px solid #5a5a5a;box-sizing:border-box"></div><div style="position:absolute;left:4px;top:1232px;width:1074px;height:1px;background:#2a2a2a;"></div><div style="position:absolute;left:224px;top:1203px;width:1px;height:29px;background:#5c5c5c;"></div><div style="position:absolute;left:808px;top:1203px;width:1px;height:29px;background:#5c5c5c;"></div><div class="t" style="left:8px;top:1209.76px;font-size:18px;color:#e8e8e8;transform:scaleX(0.9476);">Name</div><div class="t" style="left:229.5px;top:1209.76px;font-size:18px;color:#e8e8e8;transform:scaleX(0.9395);">Value</div><div class="t" style="left:813.5px;top:1209.76px;font-size:18px;color:#e8e8e8;transform:scaleX(0.9480);">Type</div><div style="position:absolute;left:4px;top:1233px;width:1074px;height:780px;background:#3c3c3c;"></div><div class="t" style="left:37.0px;top:1240.76px;font-size:18px;color:#ececec;transform:scaleX(0.9181);">Shape</div><svg style="position:absolute;left:232.5px;top:1236.5px" width="13" height="15" viewBox="0 0 13 15"><circle cx="6.5" cy="8" r="6" fill="#173a5c" opacity="0.75"/><path d="M9.5,3.5 A4.6,4.6 0 1 0 9.5,12" fill="none" stroke="#58aee6" stroke-width="2.6"/><circle cx="8" cy="8.5" r="2.4" fill="#0b3d80"/><path d="M6,1.5 L11.5,1.5 L10.5,7z" fill="#a6d6f6"/></svg><div class="t" style="left:253.5px;top:1240.76px;font-size:18px;color:#ececec;transform:scaleX(0.9561);">5 [bhkConvexVerticesShape]</div><div class="t" style="left:813.7px;top:1240.76px;font-size:18px;color:#ececec;transform:scaleX(0.9661);">Ref&lt;bhkShape&gt;</div><div style="position:absolute;left:4px;top:1264px;width:1074px;height:31px;background:#323232;"></div><div class="t" style="left:37.0px;top:1271.76px;font-size:18px;color:#ececec;transform:scaleX(0.8883);">Layer</div><div class="t" style="left:229.3px;top:1271.76px;font-size:18px;color:#ececec;transform:scaleX(0.8177);">SKYL_CLUTTER</div><div class="t" style="left:813.7px;top:1271.76px;font-size:18px;color:#ececec;transform:scaleX(0.9427);">SkyrimLayer</div><div class="t" style="left:37.0px;top:1302.76px;font-size:18px;color:#ececec;transform:scaleX(0.9619);">Flags and Part Number</div><div class="t" style="left:229.3px;top:1302.76px;font-size:18px;color:#ececec;transform:scaleX(0.9285);">0</div><div class="t" style="left:813.7px;top:1302.76px;font-size:18px;color:#ececec;transform:scaleX(0.9961);">byte</div><div style="position:absolute;left:4px;top:1326px;width:1074px;height:31px;background:#323232;"></div><div class="t" style="left:37.0px;top:1333.76px;font-size:18px;color:#ececec;transform:scaleX(0.9794);">Group</div><div class="t" style="left:229.3px;top:1333.76px;font-size:18px;color:#ececec;transform:scaleX(0.9285);">0</div><div class="t" style="left:813.7px;top:1333.76px;font-size:18px;color:#ececec;transform:scaleX(1.0094);">ushort</div><svg style="position:absolute;left:16px;top:1367.5px" width="6" height="10"><path d="M0 0V10L5.5 5Z" fill="#c8c8c8"/></svg><div class="t" style="left:37.0px;top:1364.76px;font-size:18px;color:#ececec;transform:scaleX(0.9428);">Unused</div><svg style="position:absolute;left:230.5px;top:1360.5px" width="15" height="15" viewBox="0 0 15 15"><path d="M5,2.5 A4.5,5 0 0 0 5.5,12" fill="none" stroke="#1f4f14" stroke-width="4.4"/><path d="M9.5,3 A4.5,5 0 0 1 9.5,12.5" fill="none" stroke="#1f4f14" stroke-width="4.4"/><path d="M5,2.5 A4.5,5 0 0 0 5.5,12" fill="none" stroke="#86dc62" stroke-width="2.4"/><path d="M9.5,3 A4.5,5 0 0 1 9.5,12.5" fill="none" stroke="#7cd05a" stroke-width="2.4"/><path d="M3.5,1 L8,1.5 L5.5,5.5z" fill="#b4f494"/><path d="M11,14 L6.5,13.5 L9,9.5z" fill="#7cc85a"/></svg><div class="t" style="left:813.7px;top:1364.76px;font-size:18px;color:#ececec;transform:scaleX(0.9961);">byte</div><div style="position:absolute;left:4px;top:1388px;width:1074px;height:31px;background:#323232;"></div><div class="t" style="left:37.0px;top:1395.76px;font-size:18px;color:#ececec;transform:scaleX(0.9385);">Broad Phase Type</div><div class="t" style="left:229.3px;top:1395.76px;font-size:18px;color:#ececec;transform:scaleX(0.8739);">BROAD_PHASE_ENTITY</div><div class="t" style="left:813.7px;top:1395.76px;font-size:18px;color:#ececec;transform:scaleX(0.9341);">BroadPhaseType</div><svg style="position:absolute;left:16px;top:1429.5px" width="6" height="10"><path d="M0 0V10L5.5 5Z" fill="#c8c8c8"/></svg><div class="t" style="left:37.0px;top:1426.76px;font-size:18px;color:#ececec;transform:scaleX(0.9432);">Unused Bytes</div><svg style="position:absolute;left:230.5px;top:1422.5px" width="15" height="15" viewBox="0 0 15 15"><path d="M5,2.5 A4.5,5 0 0 0 5.5,12" fill="none" stroke="#1f4f14" stroke-width="4.4"/><path d="M9.5,3 A4.5,5 0 0 1 9.5,12.5" fill="none" stroke="#1f4f14" stroke-width="4.4"/><path d="M5,2.5 A4.5,5 0 0 0 5.5,12" fill="none" stroke="#86dc62" stroke-width="2.4"/><path d="M9.5,3 A4.5,5 0 0 1 9.5,12.5" fill="none" stroke="#7cd05a" stroke-width="2.4"/><path d="M3.5,1 L8,1.5 L5.5,5.5z" fill="#b4f494"/><path d="M11,14 L6.5,13.5 L9,9.5z" fill="#7cc85a"/></svg><div class="t" style="left:813.7px;top:1426.76px;font-size:18px;color:#ececec;transform:scaleX(0.9961);">byte</div><div style="position:absolute;left:4px;top:1450px;width:1074px;height:31px;background:#323232;"></div><svg style="position:absolute;left:16px;top:1460.5px" width="6" height="10"><path d="M0 0V10L5.5 5Z" fill="#c8c8c8"/></svg><div class="t" style="left:37.0px;top:1457.76px;font-size:18px;color:#ececec;transform:scaleX(0.9882);">Cinfo Property</div><div class="t" style="left:813.7px;top:1457.76px;font-size:18px;color:#ececec;transform:scaleX(1.0076);">hkWorldObjCinfoProperty</div><div class="t" style="left:37.0px;top:1488.76px;font-size:18px;color:#ececec;transform:scaleX(0.9520);">Collision Response</div><div class="t" style="left:229.3px;top:1488.76px;font-size:18px;color:#ececec;transform:scaleX(0.8663);">RESPONSE_SIMPLE_CONTACT</div><div class="t" style="left:813.7px;top:1488.76px;font-size:18px;color:#ececec;transform:scaleX(0.9432);">hkResponseType</div><div style="position:absolute;left:4px;top:1512px;width:1074px;height:31px;background:#323232;"></div><div class="t" style="left:37.0px;top:1519.76px;font-size:18px;color:#ececec;transform:scaleX(0.9426);">Unused Byte 1</div><div class="t" style="left:229.3px;top:1519.76px;font-size:18px;color:#ececec;transform:scaleX(0.9285);">0</div><div class="t" style="left:813.7px;top:1519.76px;font-size:18px;color:#ececec;transform:scaleX(0.9961);">byte</div><div class="t" style="left:37.0px;top:1550.76px;font-size:18px;color:#ececec;transform:scaleX(0.9411);">Process Contact Callb...</div><div class="t" style="left:229.3px;top:1550.76px;font-size:18px;color:#ececec;transform:scaleX(0.9908);">65535</div><div class="t" style="left:813.7px;top:1550.76px;font-size:18px;color:#ececec;transform:scaleX(1.0094);">ushort</div><div style="position:absolute;left:4px;top:1574px;width:1074px;height:31px;background:#323232;"></div><div class="t" style="left:37.0px;top:1581.76px;font-size:18px;color:#ececec;transform:scaleX(0.9837);">Unknown Int 1</div><div class="t" style="left:229.3px;top:1581.76px;font-size:18px;color:#ececec;transform:scaleX(0.9285);">0</div><div class="t" style="left:813.7px;top:1581.76px;font-size:18px;color:#ececec;transform:scaleX(0.9550);">uint</div><svg style="position:absolute;left:16px;top:1615.5px" width="6" height="10"><path d="M0 0V10L5.5 5Z" fill="#c8c8c8"/></svg><div class="t" style="left:37.0px;top:1612.76px;font-size:18px;color:#ececec;transform:scaleX(0.9766);">Havok Filter Copy</div><div class="t" style="left:813.7px;top:1612.76px;font-size:18px;color:#ececec;transform:scaleX(0.9550);">HavokFilter</div><div style="position:absolute;left:4px;top:1636px;width:1074px;height:31px;background:#323232;"></div><svg style="position:absolute;left:16px;top:1646.5px" width="6" height="10"><path d="M0 0V10L5.5 5Z" fill="#c8c8c8"/></svg><div class="t" style="left:37.0px;top:1643.76px;font-size:18px;color:#ececec;transform:scaleX(0.9486);">Unused 2</div><svg style="position:absolute;left:230.5px;top:1639.5px" width="15" height="15" viewBox="0 0 15 15"><path d="M5,2.5 A4.5,5 0 0 0 5.5,12" fill="none" stroke="#1f4f14" stroke-width="4.4"/><path d="M9.5,3 A4.5,5 0 0 1 9.5,12.5" fill="none" stroke="#1f4f14" stroke-width="4.4"/><path d="M5,2.5 A4.5,5 0 0 0 5.5,12" fill="none" stroke="#86dc62" stroke-width="2.4"/><path d="M9.5,3 A4.5,5 0 0 1 9.5,12.5" fill="none" stroke="#7cd05a" stroke-width="2.4"/><path d="M3.5,1 L8,1.5 L5.5,5.5z" fill="#b4f494"/><path d="M11,14 L6.5,13.5 L9,9.5z" fill="#7cc85a"/></svg><div class="t" style="left:813.7px;top:1643.76px;font-size:18px;color:#ececec;transform:scaleX(0.9961);">byte</div><div class="t" style="left:37.0px;top:1674.76px;font-size:18px;color:#ececec;transform:scaleX(0.9941);">Unknown Int 2</div><div class="t" style="left:229.3px;top:1674.76px;font-size:18px;color:#ececec;transform:scaleX(0.9285);">0</div><div class="t" style="left:813.7px;top:1674.76px;font-size:18px;color:#ececec;transform:scaleX(0.9550);">uint</div><div style="position:absolute;left:4px;top:1698px;width:1074px;height:31px;background:#323232;"></div><div class="t" style="left:37.0px;top:1705.76px;font-size:18px;color:#ececec;transform:scaleX(0.9557);">Collision Response 2</div><div class="t" style="left:229.3px;top:1705.76px;font-size:18px;color:#ececec;transform:scaleX(0.8663);">RESPONSE_SIMPLE_CONTACT</div><div class="t" style="left:813.7px;top:1705.76px;font-size:18px;color:#ececec;transform:scaleX(0.9432);">hkResponseType</div><div class="t" style="left:37.0px;top:1736.76px;font-size:18px;color:#ececec;transform:scaleX(0.9553);">Unused Byte 2</div><div class="t" style="left:229.3px;top:1736.76px;font-size:18px;color:#ececec;transform:scaleX(0.9285);">0</div><div class="t" style="left:813.7px;top:1736.76px;font-size:18px;color:#ececec;transform:scaleX(0.9961);">byte</div><div style="position:absolute;left:4px;top:1760px;width:1074px;height:31px;background:#323232;"></div><div class="t" style="left:37.0px;top:1767.76px;font-size:18px;color:#ececec;transform:scaleX(0.9411);">Process Contact Callb...</div><div class="t" style="left:229.3px;top:1767.76px;font-size:18px;color:#ececec;transform:scaleX(0.9908);">65535</div><div class="t" style="left:813.7px;top:1767.76px;font-size:18px;color:#ececec;transform:scaleX(1.0094);">ushort</div><div class="t" style="left:37.0px;top:1798.76px;font-size:18px;color:#ececec;transform:scaleX(0.9347);">Translation</div><div class="t" style="left:229.3px;top:1798.76px;font-size:18px;color:#ececec;transform:scaleX(0.9820);">X 0.000000 Y 0.000000 Z -0.023800 W 0.000000</div><div class="t" style="left:813.7px;top:1798.76px;font-size:18px;color:#ececec;transform:scaleX(0.9550);">Vector4</div><div style="position:absolute;left:4px;top:1822px;width:1074px;height:31px;background:#323232;"></div><div class="t" style="left:37.0px;top:1829.76px;font-size:18px;color:#ececec;transform:scaleX(0.9784);">Rotation</div><div class="t" style="left:229.3px;top:1829.76px;font-size:18px;color:#ececec;transform:scaleX(0.9599);">Y -0.00 P 0.00 R -0.00</div><div class="t" style="left:813.7px;top:1829.76px;font-size:18px;color:#ececec;transform:scaleX(0.9550);">hkQuaternion</div><div class="t" style="left:37.0px;top:1860.76px;font-size:18px;color:#ececec;transform:scaleX(0.9472);">Linear Velocity</div><div class="t" style="left:229.3px;top:1860.76px;font-size:18px;color:#ececec;transform:scaleX(0.9773);">X 0.000000 Y 0.000000 Z 0.000000 W 0.000000</div><div class="t" style="left:813.7px;top:1860.76px;font-size:18px;color:#ececec;transform:scaleX(0.9550);">Vector4</div><div style="position:absolute;left:4px;top:1884px;width:1074px;height:31px;background:#323232;"></div><div class="t" style="left:37.0px;top:1891.76px;font-size:18px;color:#ececec;transform:scaleX(0.9831);">Angular Velocity</div><div class="t" style="left:229.3px;top:1891.76px;font-size:18px;color:#ececec;transform:scaleX(0.9773);">X 0.000000 Y 0.000000 Z 0.000000 W 0.000000</div><div class="t" style="left:813.7px;top:1891.76px;font-size:18px;color:#ececec;transform:scaleX(0.9550);">Vector4</div><svg style="position:absolute;left:16px;top:1925.5px" width="6" height="10"><path d="M0 0V10L5.5 5Z" fill="#c8c8c8"/></svg><div class="t" style="left:37.0px;top:1922.76px;font-size:18px;color:#ececec;transform:scaleX(0.9546);">Inertia Tensor</div><div class="t" style="left:813.7px;top:1922.76px;font-size:18px;color:#ececec;transform:scaleX(0.9550);">hkMatrix3</div><div style="position:absolute;left:4px;top:1946px;width:1074px;height:31px;background:#323232;"></div><div class="t" style="left:37.0px;top:1953.76px;font-size:18px;color:#ececec;transform:scaleX(0.9254);">Center</div><div class="t" style="left:229.3px;top:1953.76px;font-size:18px;color:#ececec;transform:scaleX(0.9773);">X 0.000000 Y 0.000000 Z 0.000000 W 0.000000</div><div class="t" style="left:813.7px;top:1953.76px;font-size:18px;color:#ececec;transform:scaleX(0.9550);">Vector4</div><div style="position:absolute;left:4px;top:1977px;width:1074px;height:31px;background:#cdcdcd;"></div><div class="t" style="left:37.0px;top:1984.76px;font-size:18px;color:#151515;transform:scaleX(0.9206);">Mass</div><div class="t" style="left:229.3px;top:1984.76px;font-size:18px;color:#151515;transform:scaleX(0.9768);">210.000000</div><div class="t" style="left:813.7px;top:1984.76px;font-size:18px;color:#151515;transform:scaleX(0.9550);">float</div><div style="position:absolute;left:5px;top:1969px;width:329px;height:29px;border:5px solid #fa0000;border-radius:2px"></div><div style="position:absolute;left:0px;top:2008px;width:1356px;height:5px;background:#3a3a3a;"></div><div style="position:absolute;left:1078px;top:1202px;width:20px;height:806px;background:#464646;"></div><div style="position:absolute;left:1078px;top:1202px;width:18px;height:18px;border:1px solid #555;background:#444"></div><svg style="position:absolute;left:1082px;top:1209px" width="12" height="8"><path d="M1 7H11L6 1Z" fill="#d0d0d0"/></svg><div style="position:absolute;left:1078px;top:1223px;width:18px;height:433px;border:1px solid #6a6a6a;background:#4a4a4a"></div><div style="position:absolute;left:1078px;top:1988px;width:18px;height:18px;border:1px solid #555;background:#444"></div><svg style="position:absolute;left:1082px;top:1994px" width="12" height="8"><path d="M1 1H11L6 7Z" fill="#d0d0d0"/></svg>
</body></html>
